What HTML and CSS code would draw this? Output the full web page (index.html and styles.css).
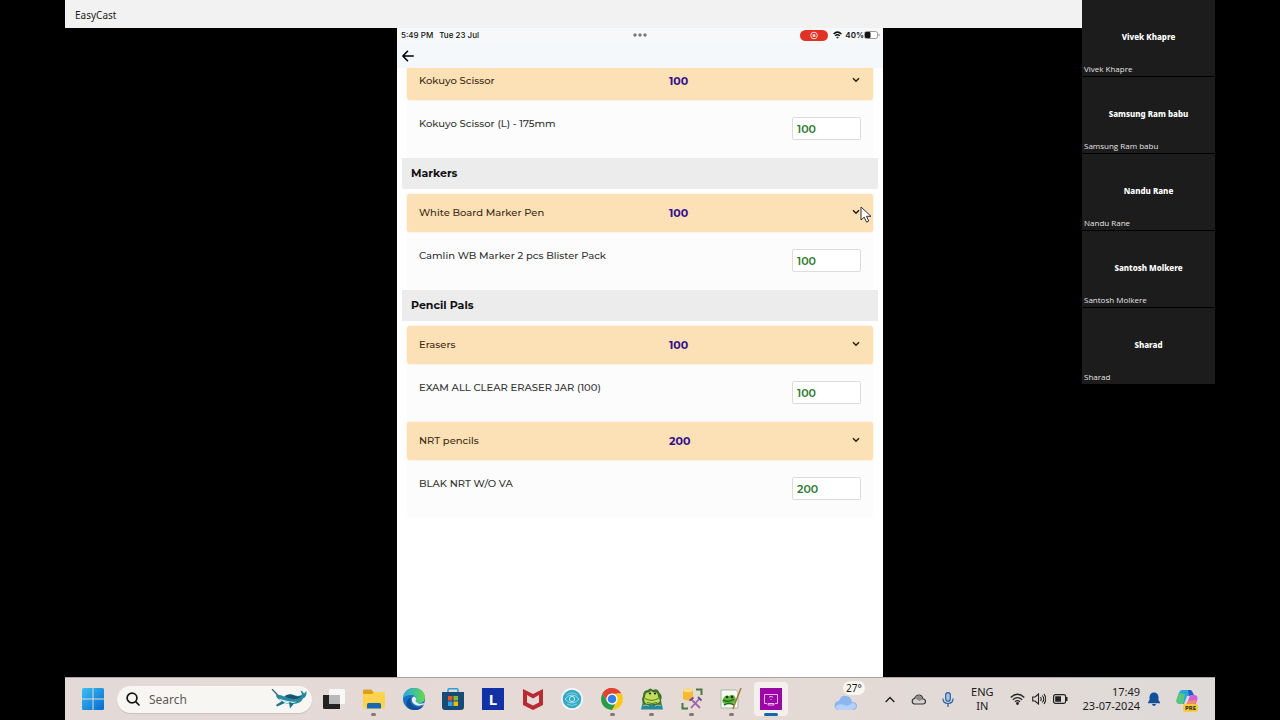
FILE: index.html
```html
<!DOCTYPE html>
<html lang="en">
<head>
<meta charset="utf-8">
<title>EasyCast</title>
<link rel="stylesheet" href="styles.css">
</head>
<body>
<div class="screen">
  <header class="titlebar">EasyCast</header>

  <main class="stage">
    <section class="device">
      <div class="status">
        <span class="status-time">5:49 PM</span>
        <span class="status-date">Tue 23 Jul</span>
        <svg class="status-dots" width="14" height="4" viewBox="0 0 14 4" fill="#77797b"><circle cx="2" cy="2" r="1.7"/><circle cx="7" cy="2" r="1.7"/><circle cx="12" cy="2" r="1.7"/></svg>
        <div class="status-right">
          <svg width="28" height="11" viewBox="0 0 28 11"><rect width="28" height="11" rx="5.5" fill="#e03326"/><circle cx="14" cy="5.5" r="3.3" fill="none" stroke="#ffd9d4"/><circle cx="14" cy="5.5" r="1.5" fill="#ffd9d4"/></svg>
          <svg class="status-wifi" width="9" height="8" viewBox="0 0 9 8" fill="none" stroke="#111" stroke-width="1.5"><path d="M.6 3Q4.500-.7 8.400 3M2.200 4.800q2.300-2 4.600 0"/><path d="M3.600 6.200h1.800L4.500 7.300z" fill="#111" stroke-width=".6"/></svg>
          <span>40%</span>
          <svg width="16" height="8" viewBox="0 0 16 8"><rect x=".5" y=".5" width="13" height="7" rx="2" fill="#fff" stroke="#999"/><rect x="1" y="1" width="5.500" height="6" rx="1" fill="#111"/><path d="M15 2.800v2.400" stroke="#999"/></svg>
        </div>
      </div>
      <nav class="appbar">
        <button class="back" aria-label="Back"><svg width="12" height="12" viewBox="0 0 12 12" fill="none" stroke="#000" stroke-width="1.600" stroke-linecap="round" stroke-linejoin="round"><path d="M11.200 6H1M5.500 1.300L.9 6l4.600 4.700"/></svg></button>
      </nav>
      <div class="viewport">
        <div class="list">
          <div class="group"><span>Kokuyo Scissor</span><b>100</b><button class="toggle" aria-label="Toggle Kokuyo Scissor"><svg width="8" height="6" viewBox="0 0 8 6"><path d="M1 1.200l3 3 3-3"/></svg></button></div>
          <div class="item"><label for="q1">Kokuyo Scissor (L) - 175mm</label><input id="q1" type="text" value="100"></div>

          <h2 class="section">Markers</h2>
          <div class="group"><span>White Board Marker Pen</span><b>100</b><button class="toggle" aria-label="Toggle White Board Marker Pen"><svg width="8" height="6" viewBox="0 0 8 6"><path d="M1 1.200l3 3 3-3"/></svg></button>
            <svg class="pointer" width="12" height="18" viewBox="0 0 12 18"><path d="M1 1v13l3.200-2.900 2.300 5 2.300-1-2.300-4.800H11z" fill="#fff" stroke="#333" stroke-linejoin="round"/></svg>
          </div>
          <div class="item"><label for="q2">Camlin WB Marker 2 pcs Blister Pack</label><input id="q2" type="text" value="100"></div>

          <h2 class="section">Pencil Pals</h2>
          <div class="group"><span>Erasers</span><b>100</b><button class="toggle" aria-label="Toggle Erasers"><svg width="8" height="6" viewBox="0 0 8 6"><path d="M1 1.200l3 3 3-3"/></svg></button></div>
          <div class="item"><label for="q3">EXAM ALL CLEAR ERASER JAR (100)</label><input id="q3" type="text" value="100"></div>
          <div class="group"><span>NRT pencils</span><b>200</b><button class="toggle" aria-label="Toggle NRT pencils"><svg width="8" height="6" viewBox="0 0 8 6"><path d="M1 1.200l3 3 3-3"/></svg></button></div>
          <div class="item"><label for="q4">BLAK NRT W/O VA</label><input id="q4" type="text" value="200"></div>
        </div>
      </div>
    </section>
  </main>

  <aside class="people">
    <div class="tile"><strong>Vivek Khapre</strong><span>Vivek Khapre</span></div>
    <div class="tile"><strong>Samsung Ram babu</strong><span>Samsung Ram babu</span></div>
    <div class="tile"><strong>Nandu Rane</strong><span>Nandu Rane</span></div>
    <div class="tile"><strong>Santosh Molkere</strong><span>Santosh Molkere</span></div>
    <div class="tile"><strong>Sharad</strong><span>Sharad</span></div>
  </aside>

  <footer class="taskbar">
    <button class="start" aria-label="Start"><svg width="22" height="22" viewBox="0 0 22 22"><defs><linearGradient id="win" x1="0" y1="0" x2="1" y2="1"><stop offset="0" stop-color="#3cc0f2"/><stop offset="1" stop-color="#0669cf"/></linearGradient></defs><path fill="url(#win)" d="M1.500 0h9v10.500H0v-9Q0 0 1.500 0zM11.500 0h9Q22 0 22 1.500v9H11.500zM0 11.500h10.500V22h-9Q0 22 0 20.500zM11.500 11.500H22v9q0 1.500-1.500 1.500h-9z"/></svg></button>
    <div class="search">
      <svg width="14" height="14" viewBox="0 0 14 14" fill="none" stroke="#151515" stroke-width="1.700" stroke-linecap="round"><circle cx="6" cy="6" r="4.900"/><path d="M9.700 9.700L13 13"/></svg>
      <input type="text" placeholder="Search" aria-label="Search">
      <svg width="36" height="20" viewBox="0 0 36 20"><path d="M1 0l6 6.500" stroke="#315d78" stroke-width="1.200"/><path d="M5 6q4-1 8 1.500Q18 4 23 6q5 2 8-.5l-1.500-4Q32 2 33 4.500L35.500 2q.5 6-3.500 7.500-2 5-10 5.500-9 .5-13-4Q5 9 5 6z" fill="#2a8a9c"/><path d="M14 7q5-3 10 0 4 1.500 7-.5-3 4-9 3.500-5-.5-8-3z" fill="#194f72"/><path d="M8 9.500q5 1.500 9 2.500t9 .5q-4 2.500-10 2-6-1-8-5z" fill="#c7ebee"/><path d="M11 12l-6 4 1 1.500 8-3.500zM18 13l1 6.500 4-5z" fill="#1c6f8c"/></svg>
    </div>
    <button class="tb" aria-label="Task view"><svg width="22" height="20" viewBox="0 0 22 20"><rect x="6" y="0" width="16" height="15" rx="1.500" fill="#f8f8f8"/><path d="M0 6h6v9h11v5H1.500Q0 20 0 18.500z" fill="#222"/><path d="M6 6h11v9H6z" fill="#b9b9b9"/></svg></button>
    <div class="apps">
      <button class="app run" aria-label="File Explorer"><svg width="22" height="21" viewBox="0 0 22 21"><path d="M0 2Q0 .5 1.500.5H8L10.500 3H20v5H0z" fill="#dd9d1f"/><path d="M0 5h9l2-2h9.500Q22 3 22 4.500V18q0 1.500-1.500 1.500h-19Q0 19.500 0 18z" fill="#ffd44c"/><path d="M4 19.500v-4Q4 14 5.500 14h11q1.500 0 1.500 1.500v4z" fill="#1768ae"/></svg></button>
      <button class="app" aria-label="Edge"><svg width="22" height="22" viewBox="0 0 22 22"><defs><linearGradient id="eg"><stop stop-color="#25a9e0"/><stop offset="1" stop-color="#64d94c"/></linearGradient></defs><circle cx="11" cy="11" r="11" fill="#1572c4"/><path d="M0 10Q1 0 11 0q10 0 11 9 0 6-6 6-5 0-3-3 1-5-5-5-5 0-8 3z" fill="url(#eg)"/><path d="M8 10q-2 5 3 8t10-1q-4 6-11 5Q2 20 4 13q1-3 4-3z" fill="#114d96"/><path d="M9 10q3-3 4 .5-.5 2.500 0 3.500 3 3 8 1l-.5 1.500Q15 19 11 16 8 13.500 9 10z" fill="#e9eff0"/></svg></button>
      <button class="app" aria-label="Microsoft Store"><svg width="22" height="22" viewBox="0 0 22 22"><path d="M6 5V2q0-1.200 1.200-1.200h7.600Q16 .8 16 2v3" fill="none" stroke="#2c9fd9" stroke-width="1.500"/><path d="M0 4h22v15q0 3-3 3H3q-3 0-3-3z" fill="#164b78"/><path d="M6 8h4.500v4.500H6z" fill="#f05029"/><path d="M11.500 8H16v4.500h-4.500z" fill="#82bd2b"/><path d="M6 13.500h4.500V18H6z" fill="#27a7e8"/><path d="M11.500 13.500H16V18h-4.500z" fill="#fdb913"/></svg></button>
      <button class="app" aria-label="L"><span class="letter">L</span></button>
      <button class="app" aria-label="McAfee"><svg width="20" height="21" viewBox="0 0 20 21"><path d="M0 0l10 5L20 0v16l-10 5-10-5z" fill="#b92b32"/><path d="M4 6l6 3.500L16 6v7.500l-6 3-6-3z" fill="#e5dcd8"/></svg></button>
      <button class="app" aria-label="Viewer"><svg width="22" height="22" viewBox="0 0 22 22"><circle cx="11" cy="11" r="11" fill="#f2fafb"/><circle cx="11" cy="11" r="9.300" fill="#38a9c5"/><path d="M4 11q7-8 14 0-7 8-14 0z" fill="none" stroke="#a0dfe9"/><circle cx="11" cy="11" r="2.600" fill="none" stroke="#b7edf4"/><path d="M5.500 7q5.500-4 11 0M6 16q5 3 10 0" fill="none" stroke="#80d1e0"/></svg></button>
      <button class="app run" aria-label="Chrome"><svg width="22" height="22" viewBox="0 0 22 22"><path d="M1.500 5.500a11 11 0 0 1 19 0H11z" fill="#e24132"/><path d="M20.500 5.500A11 11 0 0 1 11 22l4.800-8.300L11 5.500z" fill="#fbc917"/><path d="M1.500 5.500L6.200 13.700 11 16.500h3.200L11 22A11 11 0 0 1 1.500 5.500z" fill="#299b4c"/><path d="M1.500 5.500A11 11 0 0 1 11 0l5 5.500h-5A5.500 5.500 0 0 0 6.200 13.700z" fill="#e24132"/><circle cx="11" cy="11" r="5.500" fill="#fff"/><circle cx="11" cy="11" r="4.300" fill="#347ee8"/></svg></button>
      <button class="app run" aria-label="Toad"><svg width="22" height="22" viewBox="0 0 22 22"><path d="M2 13h18l2 8.500H0z" fill="#2588a0"/><path d="M2 8Q2 2 7 2q2-3 5 0 5-2 6 2 4 4 2 8 1 4-3 5H5q-6-3-3-9z" fill="#3f7429"/><path d="M4 9q0-5 4-4.500Q10 2 12 4.500q5-1 5 4 3 4 1 6-6 3-13 1-3-3-1-6.500z" fill="#c3dc5c"/><path d="M4 10.500q7 4 14-.5M6 14.500q5 2 10 0" stroke="#527d26" fill="none"/><circle cx="9" cy="5.500" r="1.100" fill="#222"/><circle cx="14" cy="5.500" r="1.100" fill="#222"/><path d="M2 18q3-2 6 0M14 18q3-2 6 0" stroke="#9cc66b" fill="none"/></svg></button>
      <button class="app run" aria-label="SQL tools"><svg width="22" height="22" viewBox="0 0 22 22"><path d="M2 2q5-3 10 0v9q-5 3-10 0z" fill="#f3bb35"/><ellipse cx="7" cy="2.500" rx="5" ry="1.700" fill="#ffe07c"/><path d="M15 1.500h5.500V7M1.500 15v5.500H7" stroke="#477844" stroke-width="2" fill="none"/><path d="M10 11l9 9M19 10l-9 10" stroke="#9d65ae" stroke-width="1.800"/><path d="M8.500 12.500l4-3M17 9l3.500 3.500" stroke="#73518e" stroke-width="2"/></svg></button>
      <button class="app run" aria-label="Notepad++"><svg width="22" height="22" viewBox="0 0 22 22"><path d="M1 2h15l2 2v16H1z" fill="#f7faf4" stroke="#a4b7a2"/><path d="M3 11q2-5 6-3 4-3 6 1 3 5-2 7H5q-4-1-2-5z" fill="#62b63a"/><path d="M3 12q6 3 11-1M4 17q5-3 10 0" stroke="#216d23" stroke-width="1.500" fill="none"/><circle cx="7" cy="9" r="1.300" fill="#193b17"/><circle cx="12" cy="9" r="1.300" fill="#193b17"/><path d="M21 0L14 18l-1 3" stroke="#a4793f" stroke-width="1.500"/></svg></button>
      <button class="app run active" aria-label="EasyCast"><svg width="22" height="22" viewBox="0 0 22 22"><path fill="#9c08a6" d="M0 0h22v22H0z"/><g fill="none" stroke="#f1b4f5"><path d="M7 15.500H4.500v-9h13v9H15M8 15.500h6v1.500H8zM9 9.200q2-1.600 4 0M11 11v1"/></g></svg></button>
    </div>
    <div class="weather"><svg width="24" height="18" viewBox="0 0 24 18"><path d="M5 17a4.500 4.500 0 0 1 0-9Q7 2 12 3q5 0 6 6 5 0 5 4t-5 4z" fill="#8db6ee"/><path d="M2 13q4-3 8-1t8-2q4 0 4 4-3 3-5 3H5q-3-1-3-4z" fill="#b5d2fa"/></svg><span>27°</span></div>
    <div class="tray">
      <button class="tb" aria-label="Hidden icons"><svg width="10" height="7" viewBox="0 0 10 7" fill="none" stroke="#222" stroke-width="1.400"><path d="M.7 6L5 1.500 9.300 6"/></svg></button>
      <button class="tb" aria-label="OneDrive"><svg width="15" height="11" viewBox="0 0 15 11"><path d="M3.500 10a2.800 2.800 0 0 1 0-5.500Q5 1 8 1t4 4q2.500 0 2.500 2.500T12 10z" fill="#d4d2d1" stroke="#333" stroke-width="1.200"/><path d="M4 4.500Q6 1.500 8 1.700q3 0 3.500 3.800L8.500 7z" fill="#8d8b8a"/></svg></button>
      <button class="tb" aria-label="Microphone"><svg width="12" height="15" viewBox="0 0 12 15" fill="none" stroke="#285f9e" stroke-width="1.200"><rect x="3.700" y=".7" width="4.600" height="8.500" rx="2.300" fill="#a9c5e6"/><path d="M1 6.500q0 5 5 5t5-5M6 11.500V15"/></svg></button>
    </div>
    <button class="lang">ENG<br>IN</button>
    <button class="quick" aria-label="Quick settings">
      <svg width="15" height="12" viewBox="0 0 15 12" fill="none" stroke="#222" stroke-width="1.200"><path d="M.7 4.500q6.800-6.500 13.600 0M2.800 6.700q4.700-4.300 9.400 0M5 8.800q2.500-2.200 5 0"/><circle cx="7.500" cy="10.500" r=".8" fill="#222"/></svg>
      <svg width="14" height="12" viewBox="0 0 14 12" fill="none" stroke="#222" stroke-width="1.100"><path d="M.7 4v4H3l3.500 3V1L3 4zM8.500 4q1.500 2 0 4M10.300 2.500q3 3.500 0 7M12 1q3.500 5 0 10"/></svg>
      <svg width="15" height="10" viewBox="0 0 15 10"><rect x=".6" y=".6" width="12" height="8.800" rx="1.800" fill="none" stroke="#222" stroke-width="1.200"/><path d="M2.200 2.200H8v5.600H2.200zM13 3h1.500v4H13z" fill="#222"/></svg>
    </button>
    <button class="clock">17:49<br>23-07-2024</button>
    <button class="tb" aria-label="Notifications"><svg width="12" height="14" viewBox="0 0 12 14" fill="#12509b"><path d="M0 10.500L1.500 8V5Q2 .5 6 .5t4.500 4.500v3l1.500 2.500v.8H0zM4 12h4q-.5 2-2 2t-2-2z"/></svg></button>
    <button class="copilot" aria-label="Copilot"><svg width="22" height="20" viewBox="0 0 22 20"><path d="M6 1h7q2 0 2.500 2l1 4H11L8 15H4q-4 0-3.500-4L3 3.500Q4 1 6 1z" fill="#2aa5dc"/><path d="M3 4l6 1-2 10H4q-4 0-3.500-4z" fill="#5dc57b"/><path d="M12 1h2q2 0 2.500 2L18 6l-5 1z" fill="#245ec5"/><path d="M14 6h4q4 0 3.500 4L19 17q-1 2-3 2H8l3-4z" fill="#cf62d4"/><path d="M12 12l8-1-2 7H9z" fill="#f08d64"/></svg><span>PRE</span></button>
  </footer>
</div>
</body>
</html>
```
FILE: styles.css
```css
* { box-sizing: border-box; }
body { margin: 0; background: #000; font-family: "Segoe UI", "Noto Sans", sans-serif; color: #1c1c1c; }
button { border: 0; padding: 0; background: none; color: inherit; font: inherit; }
svg { display: block; flex: none; }

.screen { position: relative; display: flex; flex-direction: column; min-height: 100vh; margin: 0 65px; }
.titlebar { height: 28px; padding: 0 10px; background: #f2f2f2; font-size: 10px; line-height: 30px; }
.stage { flex: 1; display: flex; justify-content: center; }

.device { flex: 0 1 486px; display: flex; flex-direction: column; background: #fff; font-family: Montserrat, Inter, sans-serif; }
.status { position: relative; display: flex; align-items: center; column-gap: 6px; height: 14px; padding: 0 3px 0 4px; background: #f6f8f9; color: #111; font: 500 8px/14px Inter, sans-serif; }
.status-time, .status-date { white-space: nowrap; }
.status-dots { position: absolute; left: 50%; margin-left: -7px; }
.status-right { display: flex; align-items: center; margin-left: auto; font-weight: 600; }
.status-wifi { margin: 0 3px 0 5px; }
.appbar { height: 26px; padding: 8px 5px; background: #f5f8fa; }
.back { display: block; }

.viewport { flex: 1; overflow: hidden; }
.list { margin-top: -6px; padding: 0 10px; font-size: 10px; font-weight: 500; line-height: 16px; }
.section { margin: 0 -5px 5px; padding: 0 9px; background: #ececec; color: #111; font-size: 11px; font-weight: 700; line-height: 31px; }
.group { position: relative; display: grid; grid-template-columns: 250px 1fr auto; align-items: center; height: 38px; padding: 0 13px 0 12px; border-radius: 3px; background: #fde1b6; box-shadow: 0 0 2px #f3dcb8; color: #3a2a12; }
.group b { color: #35108c; font-size: 11px; font-weight: 700; }
.toggle { padding-bottom: 3px; }
.toggle path { fill: none; stroke: #2a1d0c; stroke-width: 1.5; }
.pointer { position: absolute; right: 1px; top: 12px; }
.item { display: flex; justify-content: space-between; align-items: flex-start; height: 58px; padding: 16px 12px 0; background: #fcfcfc; color: #333; }
.item input { width: 69px; height: 23px; margin-top: 1px; padding: 0 4px; border: 1px solid #dcdcdc; border-radius: 2px; background: #fff; color: #2e7a2e; font: 600 11px Montserrat, Inter, sans-serif; }

.people { position: absolute; top: 0; right: 0; display: grid; gap: 1px; width: 133px; background: #000; color: #fff; }
.tile { display: flex; flex-direction: column; height: 76px; padding-top: 30px; background: #1c1c1c; }
.tile strong { align-self: center; font-size: 8px; font-weight: 800; line-height: 14px; }
.tile span { margin-top: auto; padding-left: 2px; font-family: "Open Sans", sans-serif; font-size: 8px; line-height: 14px; color: #e4e4e4; }

.taskbar { display: flex; align-items: center; height: 43px; padding: 0 17px; border-top: 1px solid #a9a3a1; background: linear-gradient(90deg, #e3d9d6, #e6dad5 55%, #dedad8); }
.start { margin-right: 13px; }
.search { flex: 0 1 195px; min-width: 0; display: flex; align-items: center; height: 27px; margin-right: 11px; padding: 0 5px 0 9px; border-radius: 14px; background: #f8f6f3; box-shadow: 0 1px 1px #c9c0bc; }
.search input { flex: 1; width: 0; min-width: 0; padding: 0 0 0 9px; border: 0; background: none; font: 12px "Segoe UI", "Noto Sans", sans-serif; }
.search input::placeholder { color: #5d5a58; opacity: 1; }
.apps { flex: 0 1 437px; display: grid; grid-template-columns: repeat(11, 1fr); margin-left: 9px; }
.app { position: relative; display: grid; place-items: center; height: 34px; }
.run::after { content: ""; position: absolute; bottom: 0; width: 5px; height: 3px; border-radius: 2px; background: #817774; }
.active { margin: 0 3px; border-radius: 4px; background: #f5efee; }
.active::after { width: 14px; background: #1468ab; }
.letter { width: 22px; background: #1231a5; color: #fff; font-size: 15px; font-weight: 700; line-height: 22px; }
.weather { position: relative; margin-left: auto; padding-top: 5px; }
.weather span { position: absolute; left: 9px; top: -7px; padding: 0 3px; border-radius: 8px; background: #f9f6f1; font-size: 10px; line-height: 14px; }
.tray { display: flex; align-items: center; gap: 16px; margin-left: 27px; }
.lang { margin-left: 17px; font-size: 11px; line-height: 14px; }
.quick { display: flex; align-items: center; gap: 7px; margin: 0 15px 0 16px; }
.clock { margin-right: 8px; font-size: 11px; line-height: 14px; text-align: right; white-space: nowrap; }
.copilot { position: relative; margin-left: 16px; }
.copilot span { position: absolute; right: 0; bottom: -3px; padding: 0 2px; border-radius: 2px; background: #f7cb3e; font-size: 6px; font-weight: 700; line-height: 8px; }
```
